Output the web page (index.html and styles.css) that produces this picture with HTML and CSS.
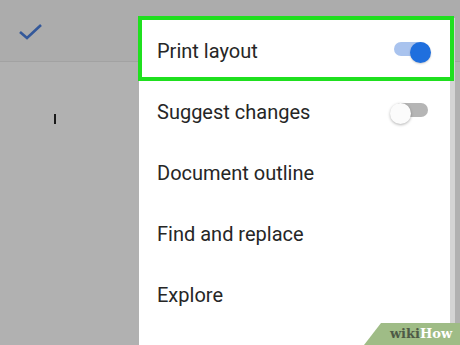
FILE: index.html
```html
<!DOCTYPE html>
<html lang="en">
<head>
    <meta charset="UTF-8">
    <meta name="viewport" content="width=device-width, initial-scale=1.0">
    <title>Docs menu</title>
    <link rel="stylesheet" href="styles.css">
</head>
<body>
    <div id="screen">
        <div class="toolbar">
            <svg class="check-icon" width="24" height="16" viewBox="0 0 24 16">
                <polyline points="1,8 8,14 22,1" fill="none" stroke="#33589a" stroke-width="2.6"/>
            </svg>
        </div>
        <div class="doc-area">
            <span class="cursor"></span>
        </div>

        <!-- overflow menu -->
        <ul class="menu">
            <li class="menu-item">
                <span>Print layout</span>
                <span class="switch on"><span class="knob"></span></span>
            </li>
            <li class="menu-item">
                <span>Suggest changes</span>
                <span class="switch"><span class="knob"></span></span>
            </li>
            <li class="menu-item"><span>Document outline</span></li>
            <li class="menu-item"><span>Find and replace</span></li>
            <li class="menu-item"><span>Explore</span></li>
        </ul>
        <div class="highlight"></div>

        <div class="badge"><span class="wiki">wiki</span><span class="how">How</span></div>
    </div>
</body>
</html>
```

FILE: styles.css
```css
body {
    margin: 0;
    padding: 0;
    font-family: Roboto, 'Noto Sans', sans-serif;
}
#screen {
    position: relative;
    width: 460px;
    height: 345px;
    overflow: hidden;
    background-color: #b1b1b1;
}
.toolbar {
    height: 61px;
    background-color: #acacac;
    border-bottom: 1px solid #a2a2a2;
    display: flex;
    align-items: center;
    padding-left: 19px;
}
.check-icon {
    margin-top: 2px;
}
.doc-area {
    padding: 52px 0 0 54px;
}
.cursor {
    display: block;
    width: 2px;
    height: 10px;
    background-color: #1a1a1a;
}
.menu {
    position: absolute;
    left: 139px;
    top: 18px;
    width: 311px;
    bottom: 0;
    margin: 0;
    padding: 0;
    list-style: none;
    background-color: #fff;
    border-right: 5px solid #d4d4d4;
}
.menu-item {
    height: 61px;
    display: flex;
    align-items: center;
    justify-content: space-between;
    padding: 0 22px 0 18px;
    font-size: 20px;
    color: #262626;
}
.menu-item span:first-child {
    margin-top: 4px;
}
.switch {
    position: relative;
    width: 34px;
    height: 14px;
    border-radius: 7px;
    background-color: #b5b5b5;
}
.switch .knob {
    position: absolute;
    left: -4px;
    top: -4px;
    width: 21px;
    height: 21px;
    border-radius: 50%;
    background-color: #fbfbfb;
    box-shadow: 0 1px 3px rgba(0, 0, 0, 0.3);
}
.switch.on {
    background-color: #a9c3ee;
}
.switch.on .knob {
    left: 16px;
    background-color: #1f6fde;
    box-shadow: 0 1px 2px rgba(0, 0, 0, 0.2);
}
.highlight {
    position: absolute;
    left: 138px;
    top: 16px;
    width: 308px;
    height: 57px;
    border: 4px solid #1fe01f;
}
.badge {
    position: absolute;
    right: 0;
    bottom: 0;
    width: 78px;
    height: 22px;
    padding-left: 18px;
    background-color: #9fbc86;
    clip-path: polygon(17px 0, 100% 0, 100% 100%, 0 100%);
    font-family: 'DejaVu Serif', serif;
    font-weight: bold;
    font-size: 13px;
    line-height: 22px;
    text-align: center;
}
.badge .wiki {
    color: #4e5a46;
}
.badge .how {
    color: #fff;
}
```
